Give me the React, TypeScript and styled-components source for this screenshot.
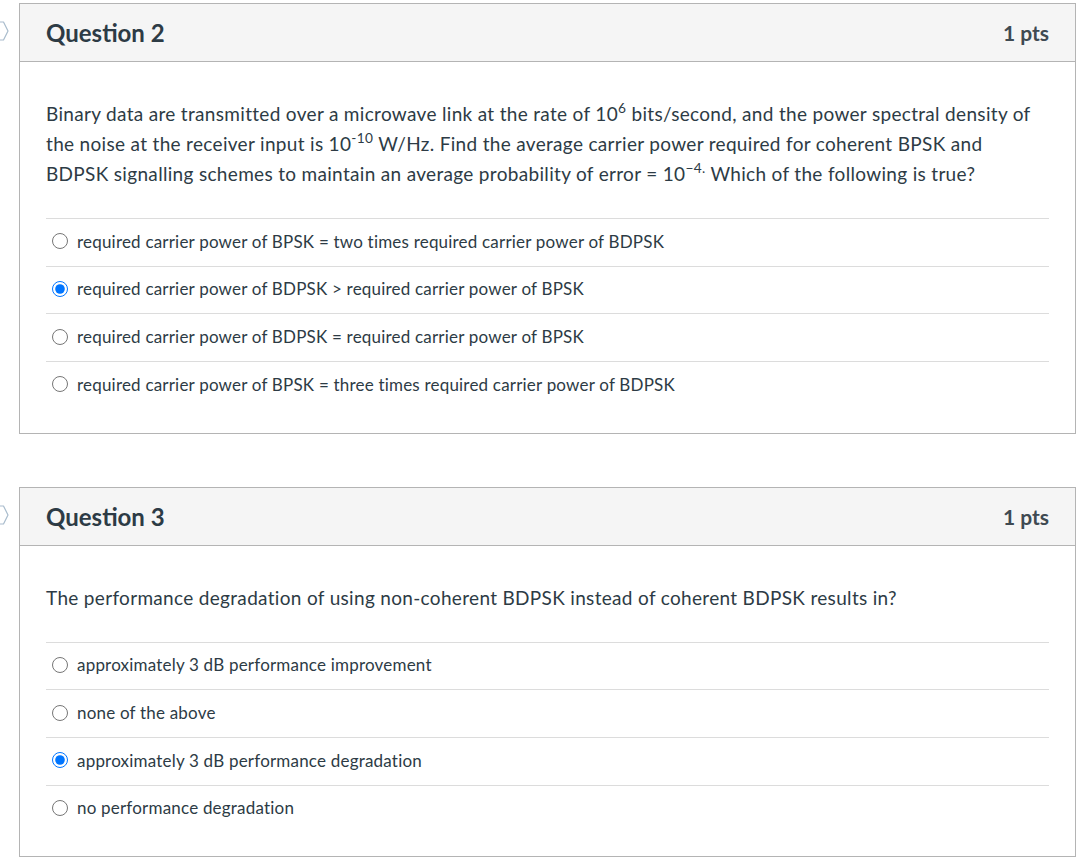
import styled, { createGlobalStyle } from "styled-components";

const GlobalStyle = createGlobalStyle`
  body {
    margin: 0;
    background: #ffffff;
    font-family: Lato, "Open Sans", "Liberation Sans", sans-serif;
    color: #2d3b45;
  }
`;

const Page = styled.div`
  display: flex;
  flex-direction: column;
  gap: 53px;
  padding: 3px 16px 0 19px;
`;

const Card = styled.section`
  position: relative;
  border: 1px solid #b4b4b4;
  background: #ffffff;
`;

const FlagMark = styled.svg`
  position: absolute;
  left: -22px;
  top: 17px;
  width: 11px;
  height: 20px;
`;

const Header = styled.header`
  display: flex;
  align-items: center;
  justify-content: space-between;
  height: 57px;
  padding: 0 26px;
  background: #f5f5f5;
  border-bottom: 1px solid #b4b4b4;
`;

const Title = styled.h2`
  margin: 0;
  font-size: 24px;
  font-weight: 700;
  color: #2d3b45;
`;

const Points = styled.span`
  font-size: 21px;
  font-weight: 700;
  color: #3f4a52;
`;

const Body = styled.div`
  padding: 37px 26px 24px;
`;

const QuestionText = styled.p`
  margin: 0 0 29px;
  font-size: 19px;
  letter-spacing: 0.32px;
  line-height: 30px;
  color: #2d3b45;

  sup {
    font-size: 0.72em;
    line-height: 0;
    vertical-align: 0.55em;
  }
`;

const AnswerList = styled.div`
  display: flex;
  flex-direction: column;
`;

const Answer = styled.label`
  display: flex;
  align-items: center;
  gap: 9px;
  height: 47.67px;
  box-sizing: border-box;
  padding: 0 0 2px 6px;
  border-top: 1px solid #dcdcdc;
  font-size: 17px;
  letter-spacing: 0.2px;
  color: #2d3b45;
`;

const Radio = styled.input`
  width: 16px;
  height: 16px;
  margin: 0;
  accent-color: #0075ff;
`;

type Question = {
  id: number;
  text: React.ReactNode;
  answers: string[];
  selected: number;
};

const questions: Question[] = [
  {
    id: 2,
    text: (
      <>
        Binary data are transmitted over a microwave link at the rate of 10
        <sup>6</sup> bits/second, and the power spectral density of the noise at
        the receiver input is 10<sup>-10</sup> W/Hz. Find the average carrier
        power required for coherent BPSK and BDPSK signalling schemes to
        maintain an average probability of error = 10<sup>−4.</sup> Which of
        the following is true?
      </>
    ),
    answers: [
      "required carrier power of BPSK = two times required carrier power of BDPSK",
      "required carrier power of BDPSK > required carrier power of BPSK",
      "required carrier power of BDPSK = required carrier power of BPSK",
      "required carrier power of BPSK = three times required carrier power of BDPSK",
    ],
    selected: 1,
  },
  {
    id: 3,
    text: "The performance degradation of using non-coherent BDPSK instead of coherent BDPSK results in?",
    answers: [
      "approximately 3 dB performance improvement",
      "none of the above",
      "approximately 3 dB performance degradation",
      "no performance degradation",
    ],
    selected: 2,
  },
];

const App = () => {
  return (
    <>
      <GlobalStyle />
      <Page>
        {questions.map((q) => (
          <Card key={q.id}>
            <FlagMark viewBox="0 0 11 20">
              <path
                d="M0.5 1 H5.5 L10 10 L5.5 19 H0.5"
                fill="#ffffff"
                stroke="#a9bccd"
                strokeWidth="1.2"
                strokeLinejoin="round"
              />
            </FlagMark>
            <Header>
              <Title>Question {q.id}</Title>
              <Points>1 pts</Points>
            </Header>
            <Body>
              <QuestionText>{q.text}</QuestionText>
              <AnswerList>
                {q.answers.map((a, i) => (
                  <Answer key={a}>
                    <Radio
                      type="radio"
                      name={`q${q.id}`}
                      defaultChecked={i === q.selected}
                    />
                    {a}
                  </Answer>
                ))}
              </AnswerList>
            </Body>
          </Card>
        ))}
      </Page>
    </>
  );
};

export default App;
